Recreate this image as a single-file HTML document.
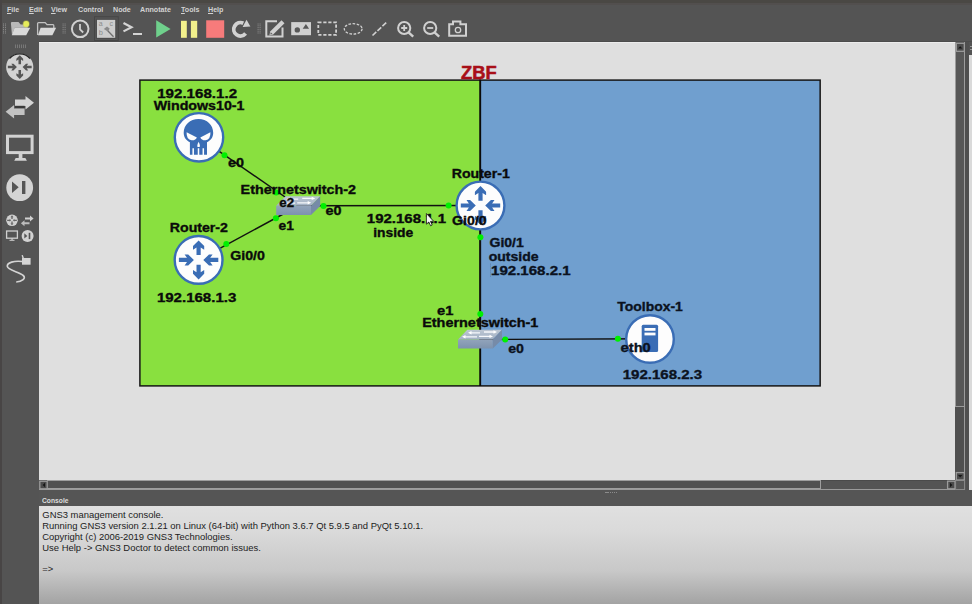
<!DOCTYPE html>
<html><head><meta charset="utf-8">
<style>
*{margin:0;padding:0;box-sizing:border-box}
html,body{width:972px;height:604px;overflow:hidden;background:#545454;font-family:"Liberation Sans",sans-serif}
.a{position:absolute}
#menu span{position:absolute;top:6px;font-size:8px;line-height:7px;font-weight:bold;color:#d2d2d2;white-space:nowrap;transform:scaleX(0.89);transform-origin:0 0}
#menu u{text-decoration:underline;text-decoration-thickness:1px;text-underline-offset:1px}
#canvas{left:39px;top:42px;width:916px;height:438px;background:#dfdfdf}
#console{left:39px;top:506px;width:933px;height:98px;background:linear-gradient(#e0e0e0 0px,#dadada 25px,#c8c8c8 65px,#a3a3a3 98px)}
#console div{position:absolute;left:3.3px;font-size:9.45px;line-height:11px;color:#1c1c1c;white-space:nowrap}
</style></head><body>
<div class="a" style="left:0;top:0;width:972px;height:3px;background:#4a4844"></div><div class="a" style="left:0;top:3px;width:972px;height:2px;background:#524f4e"></div><div class="a" style="left:39px;top:41px;width:933px;height:1px;background:#4c4c4c"></div>
<div class="a" style="left:0;top:0;width:2px;height:604px;background:#484545"></div>
<div id="menu" class="a" style="left:0;top:0;width:972px;height:16px">
<span style="left:7.4px"><u>F</u>ile</span>
<span style="left:29px"><u>E</u>dit</span>
<span style="left:51.2px"><u>V</u>iew</span>
<span style="left:77.8px">Control</span>
<span style="left:113px">Node</span>
<span style="left:140px">Annotate</span>
<span style="left:181px"><u>T</u>ools</span>
<span style="left:208px"><u>H</u>elp</span>
</div>

<!-- toolbar -->
<svg class="a" style="left:0;top:0" width="972" height="42" viewBox="0 0 972 42">
 <g fill="#8c8c8c"><rect x="3.0" y="23.5" width="1" height="1"/><rect x="3.0" y="25.3" width="1" height="1"/><rect x="3.0" y="27.1" width="1" height="1"/><rect x="3.0" y="28.9" width="1" height="1"/><rect x="3.0" y="30.7" width="1" height="1"/><rect x="3.0" y="32.5" width="1" height="1"/><rect x="5.0" y="23.5" width="1" height="1"/><rect x="5.0" y="25.3" width="1" height="1"/><rect x="5.0" y="27.1" width="1" height="1"/><rect x="5.0" y="28.9" width="1" height="1"/><rect x="5.0" y="30.7" width="1" height="1"/><rect x="5.0" y="32.5" width="1" height="1"/><rect x="62.6" y="23.5" width="1" height="1"/><rect x="62.6" y="25.3" width="1" height="1"/><rect x="62.6" y="27.1" width="1" height="1"/><rect x="62.6" y="28.9" width="1" height="1"/><rect x="62.6" y="30.7" width="1" height="1"/><rect x="62.6" y="32.5" width="1" height="1"/><rect x="64.6" y="23.5" width="1" height="1"/><rect x="64.6" y="25.3" width="1" height="1"/><rect x="64.6" y="27.1" width="1" height="1"/><rect x="64.6" y="28.9" width="1" height="1"/><rect x="64.6" y="30.7" width="1" height="1"/><rect x="64.6" y="32.5" width="1" height="1"/><rect x="257.6" y="23.5" width="1" height="1"/><rect x="257.6" y="25.3" width="1" height="1"/><rect x="257.6" y="27.1" width="1" height="1"/><rect x="257.6" y="28.9" width="1" height="1"/><rect x="257.6" y="30.7" width="1" height="1"/><rect x="257.6" y="32.5" width="1" height="1"/><rect x="259.6" y="23.5" width="1" height="1"/><rect x="259.6" y="25.3" width="1" height="1"/><rect x="259.6" y="27.1" width="1" height="1"/><rect x="259.6" y="28.9" width="1" height="1"/><rect x="259.6" y="30.7" width="1" height="1"/><rect x="259.6" y="32.5" width="1" height="1"/></g>
 <!-- new folder -->
 <path d="M10.9,23.2 Q10.9,22 12,22 h6.5 l2.2,2.6 h7 v3.2 h-13 l-2.7,7.5 Z" fill="#b9b9b9"/>
 <path d="M14.6,27.8 h15.6 l-4,7.5 h-14.4 Z" fill="#d9d9d9"/>
 <circle cx="26.2" cy="23.9" r="3.6" fill="#c8d040" opacity="0.45"/>
 <circle cx="26.2" cy="23.9" r="2.9" fill="#e6ec5a"/>
 <!-- open folder -->
 <path d="M37.6,35 V23.6 Q37.6,22.6 38.6,22.6 h6.6 l1.8,2 h6 Q53.8,24.6 53.8,25.8 V28" fill="none" stroke="#c2c2c2" stroke-width="1.3"/>
 <path d="M40.6,27.8 h15.5 l-3.7,7.5 h-14.4 Z" fill="#d9d9d9"/>
 <!-- clock -->
 <circle cx="80.2" cy="28.8" r="8.3" fill="none" stroke="#d0d0d0" stroke-width="2"/>
 <path d="M80,24 v5.4 l3.2,3.1" fill="none" stroke="#d0d0d0" stroke-width="1.8"/>
 <!-- snapshot abc -->
 <rect x="94.5" y="16.8" width="23.7" height="23.7" fill="#575757" stroke="#454545" stroke-width="1"/>
 <rect x="96.2" y="19.1" width="19.8" height="19.5" fill="none" stroke="#4a4a4a" stroke-width="0.8"/>
 <rect x="97" y="19.9" width="18.2" height="17.9" fill="#cdcdcd"/>
 <text x="98.8" y="26" font-size="7" fill="#8c8c8c" font-family="Liberation Sans">a</text>
 <text x="109.5" y="26" font-size="7" fill="#8c8c8c" font-family="Liberation Sans">c</text>
 <text x="98.8" y="35" font-size="7.4" fill="#8c8c8c" font-family="Liberation Sans">b</text>
 <path d="M103.8,29 l3.2,-2.6 l2.6,2 l-1.5,3.4 Z" fill="#8a8a8a"/><path d="M108,31 l5.5,5.8" stroke="#707070" stroke-width="1.3"/>
 <!-- console >_ -->
 <path d="M123.5,23 l8,4.2 l-8,4.2" fill="none" stroke="#d4d4d4" stroke-width="2.2"/>
 <rect x="133" y="33" width="9" height="2" fill="#d4d4d4"/>
 <!-- play -->
 <path d="M156.2,20.3 L170.6,28.9 L156.2,37.4 Z" fill="#6fd08c"/>
 <!-- pause -->
 <rect x="181" y="20.8" width="5.8" height="17" fill="#f2f08c"/>
 <rect x="190.9" y="20.8" width="6.3" height="17" fill="#f2f08c"/>
 <!-- stop -->
 <rect x="206.2" y="20.3" width="18" height="17.5" fill="#f77b7b"/>
 <!-- reload -->
 <path d="M243.3,23.2 A6.7,6.7 0 1 0 245.6,33.6" fill="none" stroke="#d2d2d2" stroke-width="3.8"/>
 <path d="M246.5,19.7 L250.4,26.4 L242.6,26.9 Z" fill="#d2d2d2"/>
 <!-- edit note -->
 <path d="M277,21.3 h-10.7 v15.3 h16.2 v-9" fill="none" stroke="#d0d0d0" stroke-width="2"/>
 <path d="M270.2,31.6 l11.3,-11.3 l3,3 l-11.3,11.3 l-3.8,0.9 Z" fill="#d0d0d0"/>
 <path d="M270.3,34.5 l2.2,-0.5 l-1.7,-1.7 Z" fill="#585858"/>
 <!-- image -->
 <rect x="291.2" y="22.1" width="19.8" height="13.1" fill="#d0d0d0"/>
 <circle cx="297.3" cy="29.9" r="2.7" fill="#585858"/>
 <path d="M302.7,28.7 l3.2,-4.6 l3.2,4.6 Z" fill="#585858"/>
 <!-- dashed rect -->
 <rect x="318.3" y="22.3" width="17.8" height="12.6" fill="none" stroke="#d0d0d0" stroke-width="1.8" stroke-dasharray="3.2,1.8"/>
 <!-- dashed ellipse -->
 <ellipse cx="353.2" cy="28.85" rx="8.9" ry="5.2" fill="none" stroke="#d0d0d0" stroke-width="1.3" stroke-dasharray="2.6,1.5"/>
 <!-- dashed line -->
 <path d="M372.5,35.5 L386.6,22.3" fill="none" stroke="#d0d0d0" stroke-width="1.6" stroke-dasharray="5.2,1.6"/>
 <!-- zoom in -->
 <circle cx="404.2" cy="28" r="6.1" fill="none" stroke="#d0d0d0" stroke-width="2"/>
 <path d="M408.5,32.3 l4.7,4.4" stroke="#d0d0d0" stroke-width="2.4"/>
 <path d="M401.2,28 h6 M404.2,25 v6" stroke="#d0d0d0" stroke-width="1.8"/>
 <!-- zoom out -->
 <circle cx="430.2" cy="28" r="6.1" fill="none" stroke="#d0d0d0" stroke-width="2"/>
 <path d="M434.5,32.3 l4.7,4.4" stroke="#d0d0d0" stroke-width="2.4"/>
 <path d="M427.2,28 h6" stroke="#d0d0d0" stroke-width="1.8"/>
 <!-- camera -->
 <path d="M449.2,24.2 h3.8 v-2.6 h7.4 v2.6 h5.6 v11.5 h-16.8 Z" fill="none" stroke="#d0d0d0" stroke-width="2"/>
 <circle cx="458" cy="30" r="2.7" fill="none" stroke="#d0d0d0" stroke-width="1.3"/>
</svg>

<!-- left dock -->
<svg class="a" style="left:0;top:42px" width="39" height="260" viewBox="0 42 39 260">
 <g fill="#7d7d7d">
  <rect x="15" y="44.5" width="0.9" height="3.6"/><rect x="17" y="44.5" width="0.9" height="3.6"/><rect x="19" y="44.5" width="0.9" height="3.6"/>
  <rect x="21" y="44.5" width="0.9" height="3.6"/><rect x="23" y="44.5" width="0.9" height="3.6"/><rect x="25" y="44.5" width="0.9" height="3.6"/>
 </g>
 <!-- router -->
 <circle cx="19.75" cy="67.1" r="13.6" fill="#d2d2d2"/>
 <path d="M9.5,58.5 A13.8,13.8 0 0 1 30,58.5" fill="none" stroke="#262626" stroke-width="1.3"/>
 <g transform="translate(19.75,67.1) scale(0.56) translate(-25,-25)" fill="#555">
  <path d="M25,5.5 L30.6,11.2 L30.6,14.8 L27.1,12.6 L27.1,20.2 L22.9,20.2 L22.9,12.6 L19.4,14.8 L19.4,11.2 Z M25,44.5 L30.6,38.8 L30.6,35.2 L27.1,37.4 L27.1,29.8 L22.9,29.8 L22.9,37.4 L19.4,35.2 L19.4,38.8 Z M20.3,25 L14.6,19.5 L11,19.5 L13.4,22.9 L5.3,22.9 L5.3,27.1 L13.4,27.1 L11,30.5 L14.6,30.5 Z M29.7,25 L35.4,19.5 L39,19.5 L36.6,22.9 L44.7,22.9 L44.7,27.1 L36.6,27.1 L39,30.5 L35.4,30.5 Z" transform="translate(25,25) scale(1.08) translate(-25,-25)"/>
 </g>
 <!-- switch arrows -->
 <path d="M15,99.5 h10.5 v-3.5 l8.5,6.7 l-8.5,6.7 v-3.5 h-10.5 Z" fill="#d4d4d4"/>
 <path d="M24.6,108.5 h-10.5 v-3.5 l-8.5,6.7 l8.5,6.7 v-3.5 h10.5 Z" fill="#c2c2c2"/>
 <path d="M15,105.8 h9.6 v2.2 h-9.6 Z" fill="#3a3a3a"/>
 <!-- monitor -->
 <rect x="7.5" y="136.2" width="24.6" height="16.4" fill="none" stroke="#d2d2d2" stroke-width="3"/>
 <rect x="18.7" y="154" width="3.7" height="4.2" fill="#d2d2d2"/>
 <path d="M14.2,160.8 l1.5,-2.8 h9.7 l1.5,2.8 Z" fill="#d2d2d2"/>
 <!-- skip circle -->
 <circle cx="19.7" cy="187.7" r="13.4" fill="#d4d4d4"/>
 <path d="M12,181.5 L18.7,187.2 L12,193 Z" fill="#555"/>
 <rect x="22" y="181" width="3.4" height="13" fill="#555"/>
 <!-- small grid -->
 <circle cx="12" cy="220.3" r="5.8" fill="#d0d0d0"/>
 <g transform="translate(6.5,214.8) scale(0.22)" fill="#666">
  <path d="M25,2 L32,11 L28,11 L28,19 L22,19 L22,11 L18,11 Z M25,48 L32,39 L28,39 L28,31 L22,31 L22,39 L18,39 Z M21,25 L14,18 L14,22 L3,22 L3,28 L14,28 L14,32 Z M29,25 L36,18 L36,22 L47,22 L47,28 L36,28 L36,32 Z"/>
 </g>
 <path d="M25,217.5 h5 v-2 l3.6,3 l-3.6,3 v-2 h-5 Z" fill="#d0d0d0"/>
 <path d="M29.5,222.3 h-5 v-2 l-3.6,3 l3.6,3 v-2 h5 Z" fill="#bdbdbd"/>
 <rect x="6.6" y="231" width="10.8" height="7.2" fill="none" stroke="#cfcfcf" stroke-width="1.3"/>
 <rect x="11.3" y="238.2" width="1.5" height="1.6" fill="#cfcfcf"/>
 <rect x="9.5" y="239.8" width="5" height="1" fill="#cfcfcf"/>
 <circle cx="27.6" cy="236" r="6" fill="#d2d2d2"/>
 <path d="M24.3,233.2 L27.3,235.9 L24.3,238.6 Z" fill="#555"/>
 <rect x="28.7" y="232.8" width="1.6" height="6.3" fill="#555"/>
 <!-- cable -->
 <rect x="22" y="258" width="8.6" height="6.7" fill="#d4d4d4"/>
 <path d="M23.2,258.3 l-1,-3.2" stroke="#d4d4d4" stroke-width="1.4"/>
 <path d="M22.5,261.5 C14,260.5 7,262.5 7.3,266.3 C7.6,270 18.5,272 23.2,275.5 C26.5,278.3 22,281.8 16.2,282" fill="none" stroke="#d4d4d4" stroke-width="1.7"/>
</svg>

<!-- canvas -->
<div id="canvas" class="a"></div>
<div class="a" style="left:39px;top:42px;width:916px;height:1px;background:#ececec"></div>

<svg class="a" style="left:0;top:0" width="972" height="604" viewBox="0 0 972 604">
 <rect x="140" y="80" width="340" height="306" fill="#89e03f"/>
 <rect x="480" y="80" width="340" height="306" fill="#709fcf"/>
 <rect x="139.9" y="80.1" width="680.25" height="305.8" fill="none" stroke="#161616" stroke-width="1.5"/>
 <line x1="480.2" y1="79.5" x2="480.2" y2="386" stroke="#0a0a0a" stroke-width="1.9"/>
 <text x="461" y="78.7" textLength="35.6" lengthAdjust="spacingAndGlyphs" font-family="Liberation Sans" font-weight="bold" font-size="17.5" fill="#a80f18" stroke="#a80f18" stroke-width="0.55">ZBF</text>
 <g stroke="#111" stroke-width="1.45" fill="none">
  <line x1="199" y1="137.3" x2="298" y2="206"/>
  <line x1="298" y1="205.8" x2="480.5" y2="205.5"/>
  <line x1="198.6" y1="259.9" x2="298" y2="206"/>
  <line x1="480.3" y1="205.5" x2="480.3" y2="340"/>
  <line x1="480" y1="339.5" x2="650" y2="338.7"/>
 </g>
 <g transform="translate(174,112.3)"><circle cx="25" cy="25" r="24.2" fill="#fdfdfd" stroke="#3a6db5" stroke-width="2.4"/><path d="M24.5,6.6 C33,6.6 39.2,12.5 39.2,20.5 C39.2,25 37,28 33,30 L33,42.5 L15.9,42.5 L15.9,30 C12,28 9.7,25 9.7,20.5 C9.7,12.5 16,6.6 24.5,6.6 Z" fill="#3a6db5"/><path d="M19.2,36 V42.6 M24.5,36 V42.6 M29.3,36 V42.6" stroke="#fdfdfd" stroke-width="1.5"/><path d="M12.6,19.9 L22.9,25.2 Q21.5,28.3 17.6,28 Q12.3,27.2 12.6,19.9 Z" fill="#fdfdfd"/><path d="M36.4,19.9 L26.3,25.2 Q27.7,28.3 31.6,28 Q36.7,27.2 36.4,19.9 Z" fill="#fdfdfd"/><path d="M24.6,29.5 Q26.5,33.5 25.6,34.8 L23.6,34.8 Q22.7,33.5 24.6,29.5 Z" fill="#fdfdfd"/></g>
 <g transform="translate(173.6,234.89999999999998)"><circle cx="25" cy="25" r="23.9" fill="#fdfdfd" stroke="#3a6db5" stroke-width="2.4"/><path d="M25,5.5 L30.6,11.2 L30.6,14.8 L27.1,12.6 L27.1,20.2 L22.9,20.2 L22.9,12.6 L19.4,14.8 L19.4,11.2 Z M25,44.5 L30.6,38.8 L30.6,35.2 L27.1,37.4 L27.1,29.8 L22.9,29.8 L22.9,37.4 L19.4,35.2 L19.4,38.8 Z M20.3,25 L14.6,19.5 L11,19.5 L13.4,22.9 L5.3,22.9 L5.3,27.1 L13.4,27.1 L11,30.5 L14.6,30.5 Z M29.7,25 L35.4,19.5 L39,19.5 L36.6,22.9 L44.7,22.9 L44.7,27.1 L36.6,27.1 L39,30.5 L35.4,30.5 Z" fill="#3a6db5"/></g>
 <g transform="translate(455.5,180.5)"><circle cx="25" cy="25" r="23.9" fill="#fdfdfd" stroke="#3a6db5" stroke-width="2.4"/><path d="M25,5.5 L30.6,11.2 L30.6,14.8 L27.1,12.6 L27.1,20.2 L22.9,20.2 L22.9,12.6 L19.4,14.8 L19.4,11.2 Z M25,44.5 L30.6,38.8 L30.6,35.2 L27.1,37.4 L27.1,29.8 L22.9,29.8 L22.9,37.4 L19.4,35.2 L19.4,38.8 Z M20.3,25 L14.6,19.5 L11,19.5 L13.4,22.9 L5.3,22.9 L5.3,27.1 L13.4,27.1 L11,30.5 L14.6,30.5 Z M29.7,25 L35.4,19.5 L39,19.5 L36.6,22.9 L44.7,22.9 L44.7,27.1 L36.6,27.1 L39,30.5 L35.4,30.5 Z" fill="#3a6db5"/></g>
 <g><circle cx="650" cy="339" r="23.8" fill="#fdfdfd" stroke="#3a6db5" stroke-width="2.4"/><rect x="641.7" y="324.8" width="16.4" height="27.2" rx="1.5" fill="#3a6db5"/><rect x="644.5" y="328" width="11" height="2.8" fill="#fdfdfd"/><rect x="644.5" y="332.6" width="11" height="2.8" fill="#fdfdfd"/></g>
 <g transform="translate(276.2,196.2)"><defs><linearGradient id="swt" x1="0" y1="0" x2="0" y2="1"><stop offset="0" stop-color="#bcc6d3"/><stop offset="1" stop-color="#a2b1c4"/></linearGradient><linearGradient id="swf" x1="0" y1="0" x2="0" y2="1"><stop offset="0" stop-color="#92a4bb"/><stop offset="1" stop-color="#7d92ae"/></linearGradient></defs><polygon points="9.3,0 44,0 34.8,9.6 0,9.6" fill="url(#swt)"/><polygon points="0,9.6 34.8,9.6 34.8,18.8 0,18.8" fill="url(#swf)"/><polygon points="34.8,9.6 44,0 44,9.8 34.8,18.8" fill="#768ba8"/><g stroke="#f6f8fb" stroke-width="1.3" fill="none"><path d="M26,2.2 L37,2.2 M12,3 L22,3 M6,7 L19,7 M21,6.6 L33,6.6"/></g><g fill="#ffffff"><path d="M39,2.2 L35.5,0.5 L35.5,3.9 Z"/><path d="M35,6.6 L31.5,4.9 L31.5,8.3 Z"/><path d="M10,3 L13.5,1.3 L13.5,4.7 Z"/><path d="M4,7 L7.5,5.3 L7.5,8.7 Z"/></g></g>
 <g transform="translate(458.0,329.8)"><defs><linearGradient id="swt" x1="0" y1="0" x2="0" y2="1"><stop offset="0" stop-color="#bcc6d3"/><stop offset="1" stop-color="#a2b1c4"/></linearGradient><linearGradient id="swf" x1="0" y1="0" x2="0" y2="1"><stop offset="0" stop-color="#92a4bb"/><stop offset="1" stop-color="#7d92ae"/></linearGradient></defs><polygon points="9.3,0 44,0 34.8,9.6 0,9.6" fill="url(#swt)"/><polygon points="0,9.6 34.8,9.6 34.8,18.8 0,18.8" fill="url(#swf)"/><polygon points="34.8,9.6 44,0 44,9.8 34.8,18.8" fill="#768ba8"/><g stroke="#f6f8fb" stroke-width="1.3" fill="none"><path d="M26,2.2 L37,2.2 M12,3 L22,3 M6,7 L19,7 M21,6.6 L33,6.6"/></g><g fill="#ffffff"><path d="M39,2.2 L35.5,0.5 L35.5,3.9 Z"/><path d="M35,6.6 L31.5,4.9 L31.5,8.3 Z"/><path d="M10,3 L13.5,1.3 L13.5,4.7 Z"/><path d="M4,7 L7.5,5.3 L7.5,8.7 Z"/></g></g>
 <circle cx="224.5" cy="155.2" r="3" fill="#00f000"/><circle cx="276.2" cy="192.5" r="3" fill="#00f000"/><circle cx="323.5" cy="205.9" r="3" fill="#00f000"/><circle cx="275.9" cy="218.2" r="3" fill="#00f000"/><circle cx="226.3" cy="244.1" r="3" fill="#00f000"/><circle cx="448.6" cy="205.5" r="3" fill="#00f000"/><circle cx="480.4" cy="237.2" r="3" fill="#00f000"/><circle cx="480.3" cy="314" r="3" fill="#00f000"/><circle cx="505.2" cy="339.4" r="3" fill="#00f000"/><circle cx="617.9" cy="338.7" r="3" fill="#00f000"/>
 <g font-family="Liberation Sans" font-weight="bold" font-size="13" fill="#0a0a0a" stroke="#0a0a0a" stroke-width="0.35">
 <text x="157.2" y="97.7" textLength="79.9" lengthAdjust="spacingAndGlyphs" fill="#0a0a0a" stroke="#0a0a0a">192.168.1.2</text>
<text x="153.7" y="109.5" textLength="90.80000000000001" lengthAdjust="spacingAndGlyphs" fill="#0a0a0a" stroke="#0a0a0a">Windows10-1</text>
<text x="227.89999999999998" y="167.1" textLength="16.0" lengthAdjust="spacingAndGlyphs" fill="#0a0a0a" stroke="#0a0a0a">e0</text>
<text x="240.6" y="194" textLength="115.4" lengthAdjust="spacingAndGlyphs" fill="#0a0a0a" stroke="#0a0a0a">Ethernetswitch-2</text>
<text x="279.3" y="207.4" textLength="14.8" lengthAdjust="spacingAndGlyphs" fill="#0a0a0a" stroke="#0a0a0a">e2</text>
<text x="325.5" y="214.8" textLength="16.0" lengthAdjust="spacingAndGlyphs" fill="#0a0a0a" stroke="#0a0a0a">e0</text>
<text x="278.5" y="230.4" textLength="15.3" lengthAdjust="spacingAndGlyphs" fill="#0a0a0a" stroke="#0a0a0a">e1</text>
<text x="169.79999999999998" y="232.1" textLength="58.1" lengthAdjust="spacingAndGlyphs" fill="#0a0a0a" stroke="#0a0a0a">Router-2</text>
<text x="230.2" y="260" textLength="34.699999999999996" lengthAdjust="spacingAndGlyphs" fill="#0a0a0a" stroke="#0a0a0a">Gi0/0</text>
<text x="156.89999999999998" y="301.5" textLength="79.4" lengthAdjust="spacingAndGlyphs" fill="#0a0a0a" stroke="#0a0a0a">192.168.1.3</text>
<text x="366.8" y="223.1" textLength="79.30000000000001" lengthAdjust="spacingAndGlyphs" fill="#0a0a0a" stroke="#0a0a0a">192.168.1.1</text>
<text x="373.2" y="237" textLength="40.0" lengthAdjust="spacingAndGlyphs" fill="#0a0a0a" stroke="#0a0a0a">inside</text>
<text x="451.7" y="177.9" textLength="58.1" lengthAdjust="spacingAndGlyphs" fill="#0a0a0a" stroke="#0a0a0a">Router-1</text>
<text x="452.09999999999997" y="224.5" textLength="34.6" lengthAdjust="spacingAndGlyphs" fill="#0a0a0a" stroke="#0a0a0a">Gi0/0</text>
<text x="489.5" y="246.7" textLength="34.3" lengthAdjust="spacingAndGlyphs" fill="#0b1220" stroke="#0b1220">Gi0/1</text>
<text x="488.7" y="261.4" textLength="50.0" lengthAdjust="spacingAndGlyphs" fill="#0b1220" stroke="#0b1220">outside</text>
<text x="491.0" y="274.8" textLength="79.60000000000001" lengthAdjust="spacingAndGlyphs" fill="#0b1220" stroke="#0b1220">192.168.2.1</text>
<text x="437.09999999999997" y="314.5" textLength="16.4" lengthAdjust="spacingAndGlyphs" fill="#0a0a0a" stroke="#0a0a0a">e1</text>
<text x="422.2" y="327.3" textLength="116.2" lengthAdjust="spacingAndGlyphs" fill="#0a0a0a" stroke="#0a0a0a">Ethernetswitch-1</text>
<text x="508.2" y="353" textLength="15.700000000000001" lengthAdjust="spacingAndGlyphs" fill="#0b1220" stroke="#0b1220">e0</text>
<text x="617.3000000000001" y="311" textLength="65.5" lengthAdjust="spacingAndGlyphs" fill="#0b1220" stroke="#0b1220">Toolbox-1</text>
<text x="620.6" y="352.4" textLength="30.2" lengthAdjust="spacingAndGlyphs" fill="#0b1220" stroke="#0b1220">eth0</text>
<text x="622.7" y="379.2" textLength="79.4" lengthAdjust="spacingAndGlyphs" fill="#0b1220" stroke="#0b1220">192.168.2.3</text>
 </g>
 <line x1="490.6" y1="263.6" x2="490.6" y2="277" stroke="#4c607c" stroke-width="0.8" stroke-dasharray="1,1" opacity="0.7"/>
 <path d="M426.4,213.5 L426.4,224.2 L428.8,222 L430.6,225.8 L432.2,225 L430.5,221.4 L433.6,221.2 Z" fill="#f4f4f4" stroke="#111" stroke-width="0.8"/>
</svg>

<!-- vertical scrollbar -->
<div class="a" style="left:955px;top:42px;width:10px;height:448px;background:#4f4f4f"></div>
<div class="a" style="left:955px;top:42px;width:1px;height:10px;background:#9a9a9a"></div>
<div class="a" style="left:964px;top:42px;width:1px;height:448px;background:#9a9a9a"></div>
<div class="a" style="left:955px;top:52px;width:10px;height:355px;background:#575757;border:1px solid #9c9c9c;border-top:none"></div>
<svg class="a" style="left:0;top:0" width="972" height="604" viewBox="0 0 972 604">
 <g fill="#4b4b4b" stroke="#9c9c9c" stroke-width="1.3">
  <rect x="956.3" y="43.3" width="8" height="8"/>
  <rect x="956.3" y="472.6" width="8" height="7.4"/>
  <rect x="947.6" y="481.2" width="7.4" height="7.6"/>
  <rect x="39.8" y="481.2" width="7.4" height="7.6"/>
 </g>
 <rect x="955.6" y="480.5" width="9" height="9" fill="#555" stroke="#8a8a8a" stroke-width="1"/>
 <g fill="#161616">
  <path d="M958,48.6 L962.4,48.6 L960.2,46.2 Z"/>
  <path d="M958,475 L962.4,475 L960.2,477.4 Z"/>
  <path d="M950,482.8 L950,487.2 L952.4,485 Z"/>
  <path d="M45,482.8 L45,487.2 L42.6,485 Z"/>
 </g>
</svg>
<!-- right panel sliver -->
<div class="a" style="left:965px;top:42px;width:4px;height:448px;background:#4f4f4f"></div>
<div class="a" style="left:969px;top:55px;width:3px;height:435px;background:#dadada"></div>
<div class="a" style="left:970px;top:46px;width:2px;height:1px;background:#9a9a9a"></div><div class="a" style="left:970px;top:49px;width:2px;height:1px;background:#9a9a9a"></div>

<!-- horizontal scrollbar -->
<div class="a" style="left:39px;top:480px;width:916px;height:10px;background:#545454"></div>
<div class="a" style="left:39px;top:480px;width:916px;height:1px;background:#4a4a4a"></div>
<div class="a" style="left:39px;top:489.2px;width:916px;height:1px;background:#9a9a9a"></div>
<div class="a" style="left:47px;top:480.3px;width:774px;height:8.9px;background:#515151;border:1px solid #9e9e9e;border-left:none"></div>
<!-- redraw buttons on top -->
<svg class="a" style="left:0;top:0" width="972" height="604" viewBox="0 0 972 604">
 <g fill="#4b4b4b" stroke="#9c9c9c" stroke-width="1.3">
  <rect x="947.6" y="481.2" width="7.4" height="7.6"/>
  <rect x="39.8" y="481.2" width="7.4" height="7.6"/>
 </g>
 <rect x="955.6" y="480.5" width="9" height="9" fill="#555" stroke="#8a8a8a" stroke-width="1"/>
 <g fill="#161616">
  <path d="M950,482.8 L950,487.2 L952.4,485 Z"/>
  <path d="M45,482.8 L45,487.2 L42.6,485 Z"/>
 </g>
</svg>

<!-- console -->
<div class="a" style="left:39px;top:490px;width:933px;height:16px;background:#555"></div>
<div class="a" style="left:41.8px;top:496px;font-size:8px;line-height:9px;font-weight:bold;color:#dedede;transform:scaleX(0.84);transform-origin:0 0">Console</div>
<div class="a" style="left:605.40px;top:492px;width:1.2px;height:1.2px;background:#8c8c8c"></div><div class="a" style="left:607.45px;top:492px;width:1.2px;height:1.2px;background:#8c8c8c"></div><div class="a" style="left:609.50px;top:492px;width:1.2px;height:1.2px;background:#8c8c8c"></div><div class="a" style="left:611.55px;top:492px;width:1.2px;height:1.2px;background:#8c8c8c"></div><div class="a" style="left:613.60px;top:492px;width:1.2px;height:1.2px;background:#8c8c8c"></div><div class="a" style="left:615.65px;top:492px;width:1.2px;height:1.2px;background:#8c8c8c"></div>
<div id="console" class="a">
<div style="top:3.3px">GNS3 management console.</div>
<div style="top:14.2px">Running GNS3 version 2.1.21 on Linux (64-bit) with Python 3.6.7 Qt 5.9.5 and PyQt 5.10.1.</div>
<div style="top:25.1px">Copyright (c) 2006-2019 GNS3 Technologies.</div>
<div style="top:36px">Use Help -&gt; GNS3 Doctor to detect common issues.</div>
<div style="top:56.5px">=&gt;</div>
</div>
</body></html>
